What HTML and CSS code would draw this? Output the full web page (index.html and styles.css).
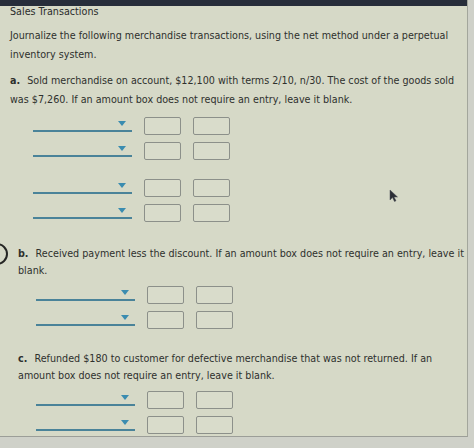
FILE: index.html
```html
<!DOCTYPE html>
<html>
<head>
<meta charset="utf-8">
<link rel="stylesheet" href="styles.css">
</head>
<body>
<div class="page">
  <div class="topbar"></div>
  <div class="title">Sales Transactions</div>
  <p class="intro">Journalize the following merchandise transactions, using the net method under a perpetual inventory system.</p>

  <p class="part part-a"><b class="letter">a.</b> Sold merchandise on account, $12,100 with terms 2/10, n/30. The cost of the goods sold was $7,260. If an amount box does not require an entry, leave it blank.</p>

  <div class="rows rows-a">
    <div class="row"><div class="select"><span class="tri"></span></div><div class="box"></div><div class="box"></div></div>
    <div class="row"><div class="select"><span class="tri"></span></div><div class="box"></div><div class="box"></div></div>
    <div class="row group-gap"><div class="select"><span class="tri"></span></div><div class="box"></div><div class="box"></div></div>
    <div class="row"><div class="select"><span class="tri"></span></div><div class="box"></div><div class="box"></div></div>
  </div>

  <div class="part-b-wrap">
    <span class="ring"></span>
    <p class="part part-b"><b class="letter">b.</b> Received payment less the discount. If an amount box does not require an entry, leave it blank.</p>
  </div>

  <div class="rows rows-b">
    <div class="row"><div class="select"><span class="tri"></span></div><div class="box"></div><div class="box"></div></div>
    <div class="row"><div class="select"><span class="tri"></span></div><div class="box"></div><div class="box"></div></div>
  </div>

  <p class="part part-c"><b class="letter">c.</b> Refunded $180 to customer for defective merchandise that was not returned. If an amount box does not require an entry, leave it blank.</p>

  <div class="rows rows-c">
    <div class="row"><div class="select"><span class="tri"></span></div><div class="box"></div><div class="box"></div></div>
    <div class="row"><div class="select"><span class="tri"></span></div><div class="box"></div><div class="box"></div></div>
  </div>

  <svg class="cursor" width="9" height="13" viewBox="0 0 9 13"><path d="M1 1 L1 11 L3.5 8.5 L5.5 12.5 L7 11.8 L5 8 L8.5 8 Z" fill="#2c2f36" stroke="#4a4e56" stroke-width="0.5"/></svg>
</div>
</body>
</html>
```

FILE: styles.css
```css
html, body {
  margin: 0;
  padding: 0;
}
body {
  background: #cfd1c9;
  font-family: "DejaVu Sans", Verdana, sans-serif;
  color: #2e302d;
  width: 474px;
  height: 448px;
  overflow: hidden;
}
.page {
  position: relative;
  width: 467px;
  height: 436px;
  background: #d6d9c7;
  border-right: 1px solid #a3a69c;
  border-bottom: 1px solid #9c9e98;
  overflow: hidden;
}
.topbar {
  height: 6px;
  background: #272d3a;
}
.title {
  font-size: 9.6px;
  line-height: 12px;
  padding-left: 10px;
  color: #2a2c2a;
}
.intro {
  margin: 7.5px 0 0 0;
  padding: 0 8px 0 10px;
  font-size: 9.6px;
  line-height: 19px;
}
.part {
  margin: 0;
  font-size: 9.6px;
}
.part-a {
  margin-top: 7px;
  padding: 0 6px 0 10px;
  line-height: 19px;
}
.letter {
  font-weight: bold;
  margin-right: 4px;
}
.rows {
  display: flex;
  flex-direction: column;
  gap: 7px;
}
.rows-a {
  margin-top: 8.5px;
  padding-left: 33px;
}
.rows-b {
  margin-top: 7px;
  padding-left: 36px;
}
.rows-c {
  margin-top: 7px;
  padding-left: 36px;
}
.row {
  display: flex;
  align-items: flex-start;
  gap: 12px;
  height: 18px;
}
.group-gap {
  margin-top: 12px;
}
.select {
  width: 99px;
  height: 15px;
  box-sizing: border-box;
  border-bottom: 2px solid #4a8399;
  display: flex;
  justify-content: flex-end;
  padding: 4px 6px 0 0;
}
.tri {
  width: 0;
  height: 0;
  border-left: 4.5px solid transparent;
  border-right: 4.5px solid transparent;
  border-top: 5px solid #3a8cb0;
}
.box {
  width: 37px;
  height: 18px;
  box-sizing: border-box;
  border: 1.5px solid #8c908a;
  border-radius: 2px;
  background: #d9dccb;
}
.part-b-wrap {
  position: relative;
  margin-top: 23px;
}
.ring {
  position: absolute;
  left: -14px;
  top: -2px;
  width: 18px;
  height: 18px;
  border: 2px solid #252624;
  border-radius: 50%;
}
.part-b, .part-c {
  padding: 0 0 0 18px;
  line-height: 17px;
}
.part-c {
  margin-top: 21px;
  padding-right: 8px;
}
.cursor {
  position: absolute;
  left: 389px;
  top: 189px;
}
```
